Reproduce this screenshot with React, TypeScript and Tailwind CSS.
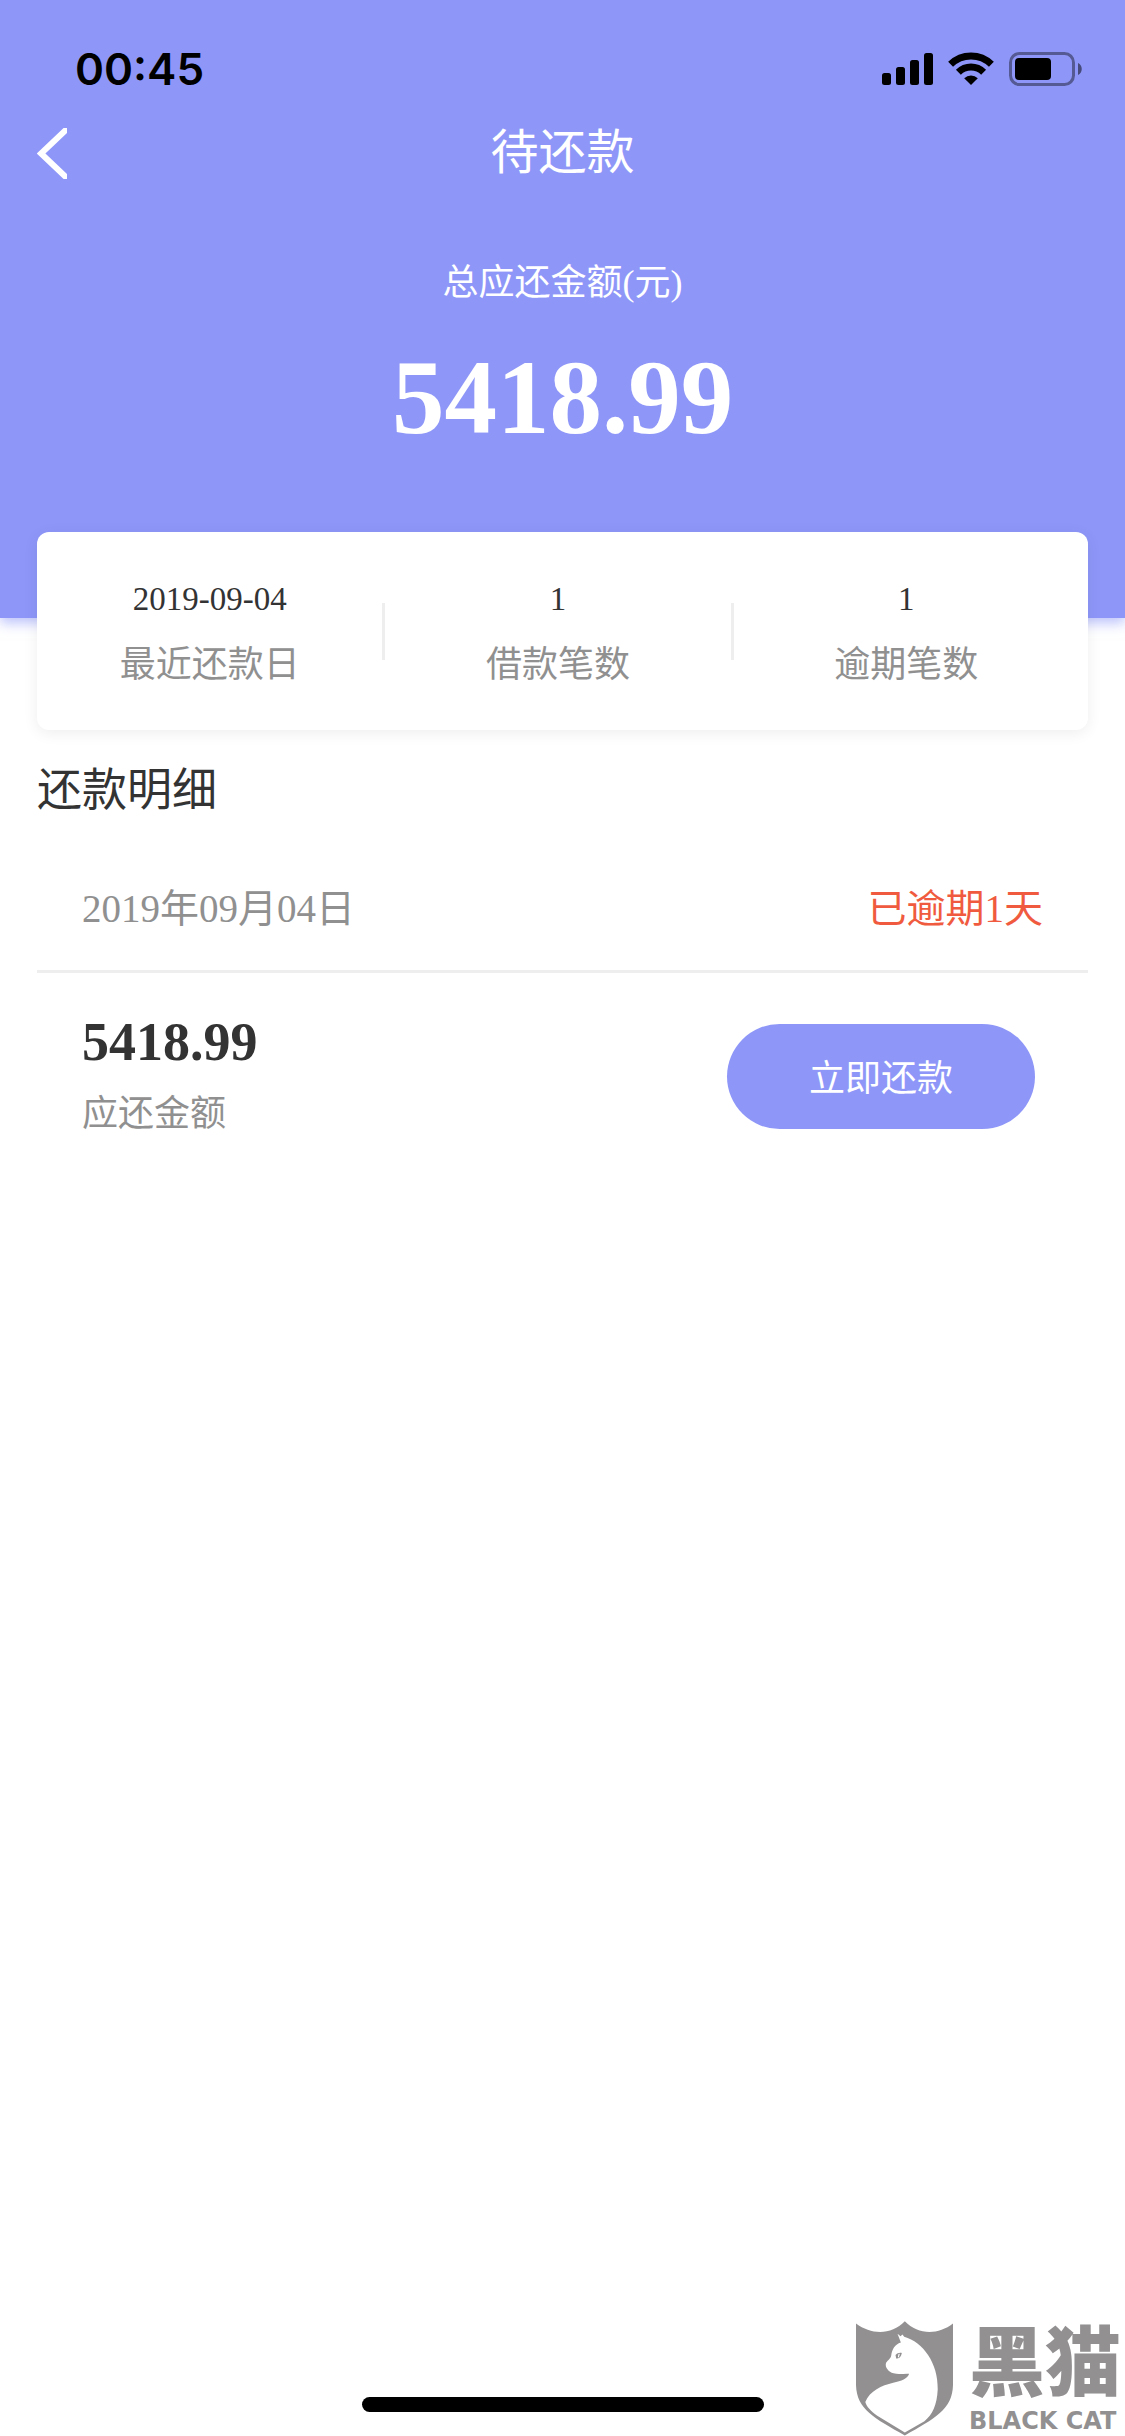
import { Fragment } from 'react';

const SUMMARY = [
    { value: '2019-09-04', label: '最近还款日' },
    { value: '1', label: '借款笔数' },
    { value: '1', label: '逾期笔数' },
];

export default function App() {
    return (
        <div className="relative flex min-h-screen flex-col bg-white font-['Liberation_Serif','Noto_Sans_CJK_SC',serif] text-[#333333]">
            <header className="bg-[#8e97f8] pt-[46px] pb-40 text-white shadow-[0_5px_12px_rgba(142,151,248,0.6)]">
                <StatusBar />
                <nav className="grid h-[122px] grid-cols-[1fr_auto_1fr] items-center px-[37px]">
                    <button type="button" aria-label="返回" className="justify-self-start">
                        <svg className="h-[51px] w-[30px]" viewBox="0 0 30 51" fill="none" aria-hidden="true">
                            <path d="M32 -1L4 25.5L32 52" stroke="currentColor" strokeWidth={6} />
                        </svg>
                    </button>
                    <h1 className="text-5xl">待还款</h1>
                </nav>
                <div className="pt-[42px] text-center">
                    <p className="text-4xl leading-[54px]">总应还金额(元)</p>
                    <p className="mt-7 text-[105px] leading-[120px] font-bold">5418.99</p>
                </div>
            </header>

            <main className="px-[37px]">
                <section className="relative -mt-[86px] flex items-center rounded-xl bg-white pr-[9px] text-center shadow-[0_3px_15px_rgba(0,0,0,0.07)]">
                    {SUMMARY.map((item, i) => (
                        <Fragment key={item.label}>
                            {i > 0 && <div className="h-[57px] w-[3px] bg-[#eeeeee]" />}
                            <div className="flex-1 pt-[46px] pb-[38px]">
                                <p className="text-[33px] leading-[42px]">{item.value}</p>
                                <p className="mt-[18px] text-4xl leading-[54px] text-[#909090]">{item.label}</p>
                            </div>
                        </Fragment>
                    ))}
                </section>

                <h2 className="mt-[30px] text-[45px] leading-[63px]">还款明细</h2>

                <section>
                    <div className="flex justify-between border-b-3 border-[#eeeeee] px-[45px] pt-14 pb-[31px] text-[39px] leading-[60px]">
                        <span className="text-[#909090]">2019年09月04日</span>
                        <span className="text-[#f05b40]">已逾期1天</span>
                    </div>
                    <div className="flex items-center justify-between pt-[39px] pr-[53px] pl-[45px]">
                        <div>
                            <p className="text-[54px] leading-[60px] font-bold">5418.99</p>
                            <p className="mt-[15px] text-4xl leading-[54px] text-[#909090]">应还金额</p>
                        </div>
                        <button
                            type="button"
                            className="h-[105px] w-[308px] rounded-full bg-[#8e97f8] pt-1 text-4xl text-white"
                        >
                            立即还款
                        </button>
                    </div>
                </section>
            </main>

            <div className="mx-auto mt-auto mb-6 h-[15px] w-[402px] rounded-full bg-black" />

            <Watermark />
        </div>
    );
}

function StatusBar() {
    return (
        <div className="flex h-[46px] items-center justify-between pr-[43px] pl-[75px] text-black">
            <span className="font-['Inter',sans-serif] text-[44px] leading-[46px] font-semibold">00:45</span>
            <svg className="h-[34px] w-[200px]" viewBox="0 0 200 34" fill="currentColor" aria-hidden="true">
                <rect x="0" y="21" width="9" height="12" rx="2.5" />
                <rect x="14" y="15" width="9" height="18" rx="2.5" />
                <rect x="28" y="8" width="9" height="25" rx="2.5" />
                <rect x="42" y="1" width="9" height="32" rx="2.5" />
                <g fill="none" stroke="currentColor" strokeWidth={7}>
                    <path d="M68.6 12.2A29.2 29.2 0 0 1 109.4 12.2" />
                    <path d="M76.4 20.2A18 18 0 0 1 101.6 20.2" />
                </g>
                <path d="M89 33L82.2 26.2A10 10 0 0 1 95.8 26.2Z" />
                <rect x="128.5" y="1.5" width="63" height="31" rx="9" fill="none" stroke="currentColor" strokeWidth={3} opacity={0.4} />
                <rect x="133" y="6" width="36" height="22" rx="4" />
                <path d="M196 11C201 13 201 21 196 23Z" opacity={0.5} />
            </svg>
        </div>
    );
}

function Watermark() {
    return (
        <div className="absolute right-0 bottom-0 flex items-end gap-4 pr-1 text-[#929091]">
            <svg className="h-[115px] w-[97px]" viewBox="48 33 292 345" aria-hidden="true">
                <path
                    fill="currentColor"
                    d="M48 40C95 75 155 75 195 33C235 75 295 75 340 40V225C338 300 285 325 195 377C105 325 50 300 48 225Z"
                />
                <path
                    fill="#fff"
                    d="M173 71L182 78L188 73L193 80C250 96 296 160 294 238C292 285 278 315 254 334L195 368L112 318C92 303 80 290 76 276C90 242 125 226 160 218C185 213 203 206 208 191C190 190 178 194 161 190C146 185 135 172 138 160C140 152 152 148 154 136C157 116 165 103 183 97Z"
                />
                <path fill="currentColor" d="M167 135C172 128 182 126 186 129C184 138 179 147 169 145Z" />
                <path fill="#fff" d="M176 132L180 131L177 142L174 141Z" />
            </svg>
            <div className="pb-px whitespace-nowrap">
                <p className="h-[88px] font-['Liberation_Sans','Noto_Sans_CJK_SC',sans-serif] text-[76px] leading-[90px] font-black">
                    黑猫
                </p>
                <p className="font-['DejaVu_Sans',sans-serif] text-2xl leading-7 font-bold">BLACK CAT</p>
            </div>
        </div>
    );
}
